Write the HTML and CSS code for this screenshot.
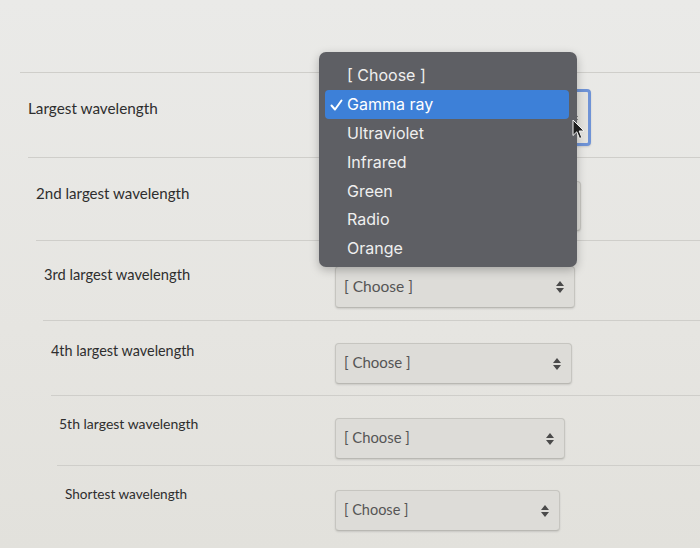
FILE: index.html
```html
<!DOCTYPE html>
<html lang="en">
<head>
    <meta charset="UTF-8">
    <title>Wavelength quiz</title>
    <link rel="stylesheet" href="styles.css">
</head>
<body>
    <div class="quiz">
        <div class="row">
            <div class="label">Largest wavelength</div>
            <div class="select focused">
                <span></span>
                <svg class="arrows" width="8" height="12" viewBox="0 0 8 12"><path d="M4 0 L8 5 H0 Z M0 7 H8 L4 12 Z"/></svg>
            </div>
        </div>
        <div class="row">
            <div class="label">2nd largest wavelength</div>
            <div class="select">
                <span></span>
                <svg class="arrows" width="8" height="12" viewBox="0 0 8 12"><path d="M4 0 L8 5 H0 Z M0 7 H8 L4 12 Z"/></svg>
            </div>
        </div>
        <div class="row">
            <div class="label">3rd largest wavelength</div>
            <div class="select">
                <span>[ Choose ]</span>
                <svg class="arrows" width="8" height="12" viewBox="0 0 8 12"><path d="M4 0 L8 5 H0 Z M0 7 H8 L4 12 Z"/></svg>
            </div>
        </div>
        <div class="row">
            <div class="label">4th largest wavelength</div>
            <div class="select">
                <span>[ Choose ]</span>
                <svg class="arrows" width="8" height="12" viewBox="0 0 8 12"><path d="M4 0 L8 5 H0 Z M0 7 H8 L4 12 Z"/></svg>
            </div>
        </div>
        <div class="row">
            <div class="label">5th largest wavelength</div>
            <div class="select">
                <span>[ Choose ]</span>
                <svg class="arrows" width="8" height="12" viewBox="0 0 8 12"><path d="M4 0 L8 5 H0 Z M0 7 H8 L4 12 Z"/></svg>
            </div>
        </div>
        <div class="row">
            <div class="label">Shortest wavelength</div>
            <div class="select">
                <span>[ Choose ]</span>
                <svg class="arrows" width="8" height="12" viewBox="0 0 8 12"><path d="M4 0 L8 5 H0 Z M0 7 H8 L4 12 Z"/></svg>
            </div>
        </div>

        <!-- open dropdown of the first select -->
        <ul class="menu">
            <li>[ Choose ]</li>
            <li class="active">
                <svg class="check" width="13" height="12" viewBox="0 0 13 12"><path d="M1.5 6.5 L5 10.5 L11.5 1.5" fill="none" stroke="#fff" stroke-width="2" stroke-linecap="round" stroke-linejoin="round"/></svg>Gamma ray
            </li>
            <li>Ultraviolet</li>
            <li>Infrared</li>
            <li>Green</li>
            <li>Radio</li>
            <li>Orange</li>
        </ul>

        <svg class="cursor" width="13" height="21" viewBox="0 0 13 21"><path d="M1 1 L1 16.5 L4.8 12.8 L7.5 19.5 L9.8 18.5 L7.2 12 L12 12 Z" fill="#1e1e1e" stroke="#f2f2f2" stroke-width="1"/></svg>
    </div>
</body>
</html>
```

FILE: styles.css
```css
* {
    margin: 0;
    padding: 0;
    box-sizing: border-box;
}
body {
    width: 700px;
    height: 548px;
    overflow: hidden;
    background: linear-gradient(180deg, #eaeae8 0%, #e6e5e1 60%, #e2e1dc 100%);
    font-family: Lato, "Open Sans", sans-serif;
    color: #333;
}
.quiz {
    position: relative;
    padding-top: 72px;
    height: 548px;
}
/* each question row; values tuned per row below */
.row {
    display: flex;
    align-items: flex-start;
    margin-left: var(--indent);
    height: var(--h);
    border-top: 1px solid #cfceca;
}
.label {
    width: calc(335px - var(--indent));
    padding-left: 8px;
    padding-top: var(--label-top);
    font-size: var(--fs);
    line-height: 20px;
    color: #2e2e2e;
}
.select {
    display: flex;
    align-items: center;
    justify-content: space-between;
    margin-top: var(--sel-top);
    width: var(--sel-w);
    height: var(--sel-h);
    padding: 0 10px 0 8px;
    background: #dddcd8;
    border: 1px solid #c6c5c0;
    border-bottom-color: #b9b8b3;
    border-radius: 4px;
    box-shadow: 0 1px 2px rgba(0, 0, 0, 0.12);
    font-size: var(--sel-fs);
    color: #555;
}
.select span {
    margin-top: -3px;
}
.select .arrows {
    fill: #4a4a4a;
}
.select.focused {
    border: 3px solid #6f93d6;
    background: #e4e3df;
}
.row:nth-child(1) { --indent: 20px; --h: 85px; --label-top: 25px; --fs: 15.3px; --sel-top: 16px; --sel-w: 256px; --sel-h: 57px; --sel-fs: 15.5px; }
.row:nth-child(2) { --indent: 28px; --h: 83px; --label-top: 25px; --fs: 15.1px; --sel-top: 23px; --sel-w: 246px; --sel-h: 50px; --sel-fs: 15.5px; }
.row:nth-child(3) { --indent: 36px; --h: 80px; --label-top: 23px; --fs: 14.7px; --sel-top: 25px; --sel-w: 240px; --sel-h: 42px; --sel-fs: 15.5px; }
.row:nth-child(4) { --indent: 43px; --h: 75px; --label-top: 20px; --fs: 14.4px; --sel-top: 22px; --sel-w: 237px; --sel-h: 41px; --sel-fs: 15px; }
.row:nth-child(5) { --indent: 51px; --h: 70px; --label-top: 18px; --fs: 14px; --sel-top: 22px; --sel-w: 230px; --sel-h: 41px; --sel-fs: 14.8px; }
.row:nth-child(6) { --indent: 57px; --h: 83px; --label-top: 18px; --fs: 13.6px; --sel-top: 24px; --sel-w: 225px; --sel-h: 41px; --sel-fs: 14.5px; }

.menu {
    position: absolute;
    left: 319px;
    top: 52px;
    width: 258px;
    height: 215px;
    padding: 9px 8px 0 6px;
    list-style: none;
    background: #5e5f64;
    border-radius: 7px;
    box-shadow: 0 3px 10px rgba(0, 0, 0, 0.25);
    font-family: Inter, "Noto Sans", sans-serif;
    font-size: 16px;
    color: #efefef;
}
.menu li {
    position: relative;
    height: 28.9px;
    line-height: 29px;
    padding-left: 22px;
}
.menu li.active {
    background: #3d80d8;
    border-radius: 4px;
    color: #fff;
}
.menu .check {
    position: absolute;
    left: 5px;
    top: 9px;
}
.cursor {
    position: absolute;
    left: 572px;
    top: 119px;
}
```
